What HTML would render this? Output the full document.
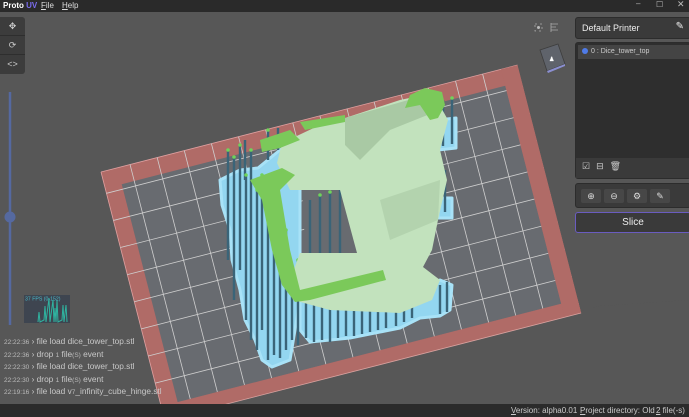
<!DOCTYPE html>
<html><head><meta charset="utf-8"><style>
*{margin:0;padding:0;box-sizing:border-box}
html,body{width:689px;height:417px;overflow:hidden}
body{background:#575757;font-family:"Liberation Sans",sans-serif;position:relative}
.title{position:absolute;left:0;top:0;width:689px;height:12px;background:#2a2a2a;color:#ddd;font-size:8px}
.title span{position:absolute;top:1px}
.status{position:absolute;left:0;top:404px;width:689px;height:13px;background:#2b2b2b;color:#ccc;font-size:8px}
.status span{position:absolute;top:2px}
.tb{position:absolute;left:0;top:17px;width:25px;height:57px;background:#3c3c3c;border-radius:0 3px 3px 0}
.tb div{height:19px;border-bottom:1px solid #2e2e2e;color:#ccc;font-size:9px;text-align:center;line-height:19px}
.panel{position:absolute;background:#3a3a3a;border:1px solid #2c2c2c;border-radius:3px}
.log{position:absolute;left:4px;top:336px;height:65px;overflow:hidden;color:#c8c8c8;font-size:8.3px;line-height:11.5px}
.log b{font-weight:normal;font-size:6.5px;color:#bbb}
.btn{position:absolute;top:189px;width:20px;height:14px;background:#474747;border-radius:2px;color:#ddd;font-size:9px;text-align:center;line-height:14px}
</style></head><body>
<svg width="689" height="417" style="position:absolute;left:0;top:0">
<g transform="translate(101,172) rotate(-14.4)">
<rect x="0" y="0" width="430" height="300" fill="#b06b67"/>
<rect x="17" y="17" width="396" height="225" fill="#686b70"/>
<rect x="17" y="242" width="396" height="60" fill="#686b70" transform="translate(6,0)"/>
<g stroke="#cfcfcf" stroke-width="0.8">
<line x1="0" y1="0" x2="0" y2="300" stroke="#e0a0a0"/>
<line x1="0" y1="0" x2="430" y2="0" stroke="#e0a0a0"/>
<line x1="30" y1="0" x2="30" y2="300"/><line x1="58" y1="0" x2="58" y2="300"/><line x1="86" y1="0" x2="86" y2="300"/><line x1="114" y1="0" x2="114" y2="300"/><line x1="142" y1="0" x2="142" y2="300"/><line x1="170" y1="0" x2="170" y2="300"/><line x1="198" y1="0" x2="198" y2="300"/><line x1="226" y1="0" x2="226" y2="300"/><line x1="254" y1="0" x2="254" y2="300"/><line x1="282" y1="0" x2="282" y2="300"/><line x1="310" y1="0" x2="310" y2="300"/><line x1="338" y1="0" x2="338" y2="300"/><line x1="366" y1="0" x2="366" y2="300"/><line x1="394" y1="0" x2="394" y2="300"/><line x1="422" y1="0" x2="422" y2="300"/>
<line x1="0" y1="22" x2="430" y2="22"/><line x1="0" y1="50" x2="430" y2="50"/><line x1="0" y1="78" x2="430" y2="78"/><line x1="0" y1="106" x2="430" y2="106"/><line x1="0" y1="134" x2="430" y2="134"/><line x1="0" y1="162" x2="430" y2="162"/><line x1="0" y1="190" x2="430" y2="190"/><line x1="0" y1="218" x2="430" y2="218"/><line x1="0" y1="246" x2="430" y2="246"/><line x1="0" y1="274" x2="430" y2="274"/>
</g></g>
<!-- cover plate beyond bottom-right corner -->
<polygon points="577,312 600,306 689,300 689,404 300,404 180,417" fill="#575757" />
<g transform="translate(101,172) rotate(-14.4)">
<line x1="0" y1="0" x2="0" y2="300" stroke="#b06b67" stroke-width="0"/>
</g>
<polygon points="172,404 577,312 600,312 600,404" fill="none"/>
<!-- redraw red bottom band -->
<g transform="translate(101,172) rotate(-14.4)">
<rect x="0" y="242" width="430" height="14" fill="#b06b67"/>
<rect x="413" y="0" width="17" height="256" fill="#b06b67"/>
<line x1="0" y1="256" x2="430" y2="256" stroke="#d9a29f" stroke-width="0.8"/>
</g>
<!-- raft -->
<g fill="#93d6f0" stroke="#a8e2f7" stroke-width="3" stroke-linejoin="round">
<polygon points="220,180 240,170 258,168 280,150 300,140 300,330 310,342 350,338 400,328 420,318 440,316 450,310 452,285 440,280 410,300 300,300 290,360 272,367 262,360 255,340 245,320 240,290 232,260 230,230 222,205"/>
<polygon points="438,120 456,118 456,148 438,150"/>
<polygon points="438,198 452,198 452,218 438,218"/>
</g>
<polygon fill="#686b70" points="302,185 345,177 360,255 306,265"/>
<!-- sticks -->
<g stroke="#3a6478" stroke-width="2.4">
<line x1="228" y1="150" x2="228" y2="260"/><line x1="234" y1="157" x2="234" y2="300"/><line x1="240" y1="145" x2="240" y2="270"/><line x1="246" y1="175" x2="246" y2="320"/><line x1="251" y1="150" x2="251" y2="340"/><line x1="257" y1="190" x2="257" y2="350"/><line x1="262" y1="175" x2="262" y2="330"/><line x1="268" y1="210" x2="268" y2="360"/><line x1="274" y1="190" x2="274" y2="355"/><line x1="280" y1="240" x2="280" y2="358"/><line x1="286" y1="230" x2="286" y2="350"/><line x1="292" y1="270" x2="292" y2="340"/><line x1="298" y1="260" x2="298" y2="345"/>
<line x1="310" y1="200" x2="310" y2="262"/><line x1="320" y1="195" x2="320" y2="260"/><line x1="330" y1="192" x2="330" y2="258"/><line x1="340" y1="190" x2="340" y2="256"/>
<line x1="306" y1="300" x2="306" y2="338"/><line x1="314" y1="300" x2="314" y2="342"/><line x1="322" y1="305" x2="322" y2="340"/><line x1="330" y1="300" x2="330" y2="342"/><line x1="338" y1="305" x2="338" y2="338"/><line x1="346" y1="300" x2="346" y2="336"/><line x1="354" y1="305" x2="354" y2="336"/><line x1="362" y1="300" x2="362" y2="334"/><line x1="370" y1="305" x2="370" y2="332"/><line x1="378" y1="300" x2="378" y2="330"/><line x1="386" y1="305" x2="386" y2="328"/><line x1="396" y1="300" x2="396" y2="326"/><line x1="404" y1="305" x2="404" y2="322"/>
<line x1="412" y1="290" x2="412" y2="318"/><line x1="440" y1="285" x2="440" y2="314"/><line x1="447" y1="282" x2="447" y2="312"/>
<line x1="443" y1="100" x2="443" y2="146"/><line x1="452" y1="98" x2="452" y2="144"/><line x1="445" y1="170" x2="445" y2="212"/>
<line x1="268" y1="130" x2="268" y2="160"/><line x1="278" y1="128" x2="278" y2="150"/><line x1="245" y1="140" x2="245" y2="180"/>
</g>
<g fill="#6fd35a">
<circle cx="228" cy="150" r="1.8"/><circle cx="240" cy="145" r="1.8"/><circle cx="251" cy="150" r="1.8"/><circle cx="234" cy="157" r="1.8"/><circle cx="246" cy="175" r="1.8"/><circle cx="262" cy="175" r="1.8"/><circle cx="257" cy="190" r="1.8"/><circle cx="274" cy="190" r="1.8"/><circle cx="268" cy="210" r="1.8"/><circle cx="286" cy="230" r="1.8"/><circle cx="280" cy="240" r="1.8"/><circle cx="298" cy="260" r="1.8"/><circle cx="292" cy="270" r="1.8"/><circle cx="452" cy="98" r="1.8"/><circle cx="268" cy="130" r="1.8"/><circle cx="320" cy="195" r="1.8"/><circle cx="330" cy="192" r="1.8"/>
</g>
<!-- body -->
<polygon fill="#c2e2bd" points="277,163 282,143 320,125 345,118 400,100 433,93 448,120 440,150 447,180 438,220 432,250 423,267 440,280 432,300 400,313 330,310 293,300 290,280 300,253 357,253 340,190 290,190"/>
<polygon fill="#a9c9a4" points="345,118 433,93 440,110 390,130 360,160 345,145"/>
<polygon fill="#b3d3ae" points="380,200 440,180 438,220 390,240"/>
<g fill="#7bc95a">
<polygon points="250,180 282,168 295,175 280,190 290,250 300,290 383,270 386,280 310,300 295,302 282,285 272,250 262,200"/>
<polygon points="260,140 290,130 300,140 280,148 262,152"/>
<polygon points="410,95 425,88 442,92 445,105 438,118 430,120 420,105 405,108"/>
<polygon points="300,122 345,115 345,122 305,130"/>
</g>
<!-- slider -->
<line x1="10" y1="92" x2="10" y2="325" stroke="#5569a0" stroke-width="2.5"/>
<circle cx="10" cy="217" r="5.5" fill="#5569a0"/>
<rect x="24" y="295" width="46" height="28" fill="#3e4550"/>
<polyline fill="none" stroke="#2fb3a0" stroke-width="1" points="38,322 39,312 40,322 44,320 45,306 46,322 49,298 50,322 53,300 54,322 55,308 56,322 57,300 58,322 62,320 63,305 64,322 66,305 67,322"/>
<text x="25" y="300.5" font-size="5.2" fill="#49b8c8" font-family="Liberation Sans">37 FPS (0-152)</text>
<!-- cube -->
<polygon points="540,50 558,44 565,64 547,71" fill="#5f636b" stroke="#3d3d3d" stroke-width="0.8"/>
<polygon points="547,71 565,64 565,66 548,73" fill="#8b8fd0"/>
<text x="549" y="61" font-size="6" fill="#fff" font-weight="bold">♟</text>
<!-- view icons -->
<rect x="535" y="24" width="7" height="7" fill="none" stroke="#aaa" stroke-width="0.8" stroke-dasharray="2 3"/>
<circle cx="538.5" cy="27.5" r="1.5" fill="#bbb"/>
<path d="M551 23 V32 M551 24 H558 M551 27 H556 M551 30 H558" stroke="#aaa" stroke-width="0.8"/>
</svg>
<div class="title">
<span style="left:3px;font-weight:bold;color:#fff">Proto <span style="position:static;color:#7b6cf0">UV</span></span>
<span style="left:41px"><u>F</u>ile</span><span style="left:62px"><u>H</u>elp</span>
<span style="left:636px;top:-1px;color:#bbb">–</span><span style="left:656px;color:#bbb;font-size:8px;top:0">☐</span><span style="left:677px;color:#bbb;font-size:9px;top:-1px">✕</span>
</div>
<div class="tb"><div>✥</div><div>⟳</div><div style="border:0">&lt;&gt;</div></div>
<div class="log">
<div><b>22:22:36</b> › file load dice_tower_top.stl</div>
<div><b>22:22:36</b> › drop <b>1</b> file<b>(S)</b> event</div>
<div><b>22:22:30</b> › file load dice_tower_top.stl</div>
<div><b>22:22:30</b> › drop <b>1</b> file<b>(S)</b> event</div>
<div><b>22:19:16</b> › file load v<b>7</b>_infinity_cube_hinge.stl</div>
<div><b>22:19:16</b> › version_alpha0.01</div>
</div>
<div class="panel" style="left:575px;top:17px;width:116px;height:22px;color:#eee;font-size:9px;padding:5px 0 0 6px">Default Printer<span style="position:absolute;right:6px;top:3px;font-size:10px">✎</span></div>
<div class="panel" style="left:575px;top:42px;width:116px;height:137px;background:#2e2e2e">
<div style="margin:2px 0 0 2px;height:14px;background:#444;color:#ccc;font-size:7px;line-height:14px;padding-left:4px"><span style="display:inline-block;width:6px;height:6px;border-radius:50%;background:#4f7be8;vertical-align:-1px;margin-right:3px"></span>0 : Dice_tower_top</div>
<div style="position:absolute;left:0;bottom:0;width:100%;height:20px;background:#3a3a3a;color:#ccc;font-size:9px;padding:3px 0 0 6px;letter-spacing:6px">☑⊟🗑</div>
</div>
<div class="panel" style="left:575px;top:183px;width:116px;height:25px"></div>
<div class="btn" style="left:581px">⊕</div><div class="btn" style="left:604px">⊖</div><div class="btn" style="left:627px">⚙</div><div class="btn" style="left:650px">✎</div>
<div class="panel" style="left:575px;top:212px;width:116px;height:21px;border:1px solid #6a5cc0;color:#eee;font-size:10px;text-align:center;line-height:19px">Slice</div>
<div class="status">
<span style="left:511px"><u>V</u>ersion: alpha0.01</span>
<span style="left:580px"><u>P</u>roject directory: Old</span>
<span style="left:656px"><u>2</u> file(-s)</span>
</div>
</body></html>
